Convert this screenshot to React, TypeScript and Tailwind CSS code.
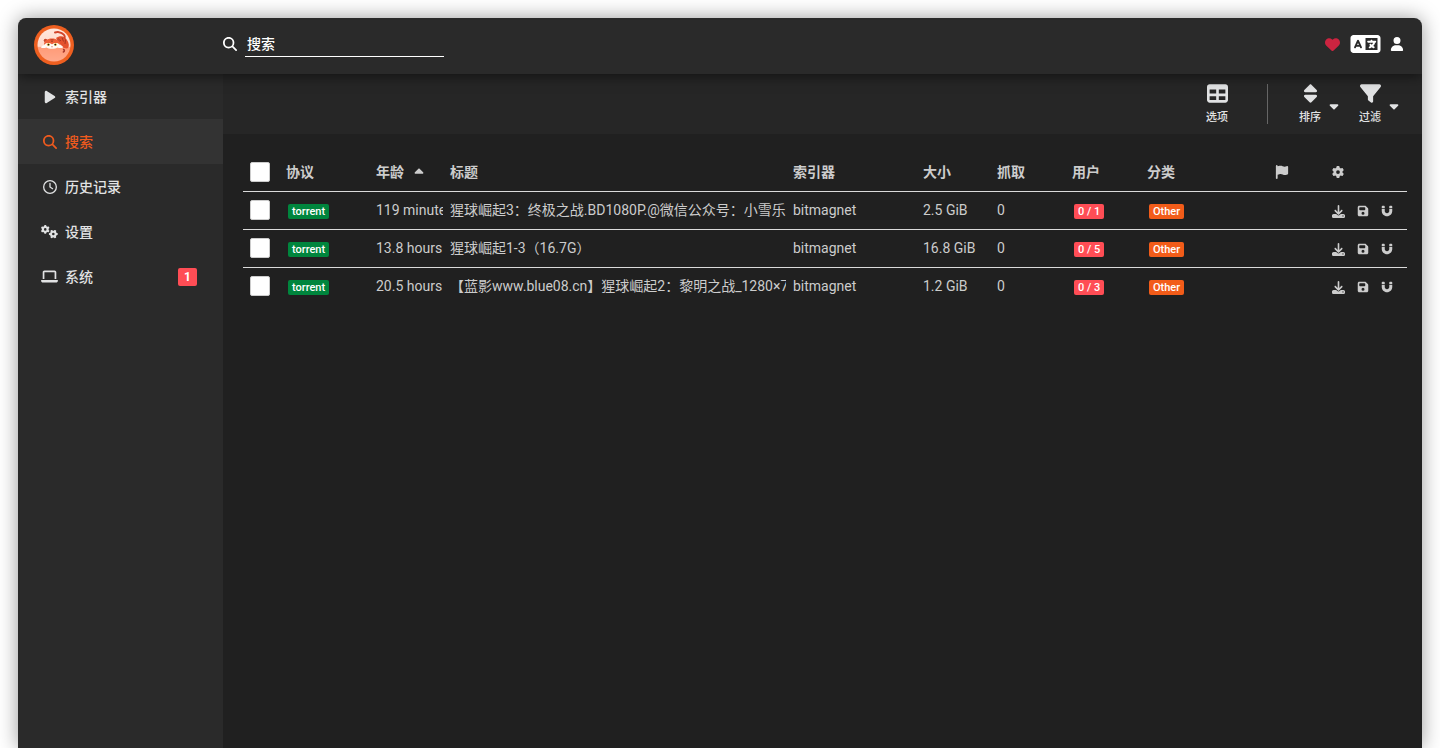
import type { ReactNode } from 'react';
import type { IconType } from 'react-icons';
import {
  FaCaretDown,
  FaCaretUp,
  FaDownload,
  FaFilter,
  FaFlag,
  FaFloppyDisk,
  FaGear,
  FaGears,
  FaHeart,
  FaLanguage,
  FaLaptop,
  FaMagnet,
  FaMagnifyingGlass,
  FaPlay,
  FaRegClock,
  FaSort,
  FaTable,
  FaUser,
} from 'react-icons/fa6';

type NavItem = { label: string; icon: IconType; active?: boolean; badge?: number };

const navItems: NavItem[] = [
  { label: '索引器', icon: FaPlay },
  { label: '搜索', icon: FaMagnifyingGlass, active: true },
  { label: '历史记录', icon: FaRegClock },
  { label: '设置', icon: FaGears },
  { label: '系统', icon: FaLaptop, badge: 1 },
];

const releases = [
  { age: '119 minutes', title: '猩球崛起3：终极之战.BD1080P.@微信公众号：小雪乐园', size: '2.5 GiB', grabs: 0, peers: '0 / 1' },
  { age: '13.8 hours', title: '猩球崛起1-3（16.7G）', size: '16.8 GiB', grabs: 0, peers: '0 / 5' },
  { age: '20.5 hours', title: '【蓝影www.blue08.cn】猩球崛起2：黎明之战_1280×720', size: '1.2 GiB', grabs: 0, peers: '0 / 3' },
];

function Logo() {
  return (
    <svg viewBox="0 0 40 40" className="size-10" aria-hidden="true">
      <defs>
        <linearGradient id="logoFill" x1="0" y1="0" x2="0" y2="1">
          <stop offset="0" stopColor="#ffe6dc" />
          <stop offset="0.54" stopColor="#ffd9ca" />
          <stop offset="0.58" stopColor="#ff9b78" />
          <stop offset="1" stopColor="#ffa98c" />
        </linearGradient>
      </defs>
      <circle cx="20" cy="20" r="20" fill="#ee5f20" />
      <circle cx="20" cy="20" r="16.500" fill="url(#logoFill)" />
      {/* body and tail */}
      <path d="M22 13c4-3 9-2 11 2 2 3 2.500 6 1 8-1 1-4 0-6-1z" fill="#e5522e" />
      <path d="M21 7.500c3-1 6 0 8 1.500 1.500 1 2 2.500 1.500 4" stroke="#d2452b" strokeWidth="2" fill="none" strokeLinecap="round" strokeDasharray="3 0.800" />
      <path d="M24.500 13.500l2.500 2.500M28 12.500l1.500 4M31.500 14.500l-.5 4.500" stroke="#93301f" strokeWidth="0.800" fill="none" />
      <path d="M29.500 24.500c1.500.5 1 2-.2 2.500" stroke="#a9382a" strokeWidth="1.500" fill="none" strokeLinecap="round" />
      {/* head */}
      <circle cx="11.500" cy="15.500" r="1.800" fill="#c94a30" />
      <circle cx="24.500" cy="15.500" r="1.800" fill="#c94a30" />
      <path d="M10 19.500c0-3.500 3-6 8-6s8 2.500 8 6z" fill="#ee5f38" />
      <path d="M7 22.500c.5-1.500 2-2.500 3.500-2.500 1-2.500 5-2.500 7.500-.5 2.500-2 6.500-2 7.500.5 2 0 3.500 1 3.500 2.500-2 1-4 .5-5.500 0-2 1.800-9 1.800-11 0-2 .5-4 1-5.500 0z" fill="#fffaf5" />
      <circle cx="14.300" cy="19.500" r="1.500" fill="#f5cf62" />
      <circle cx="21.500" cy="19.500" r="1.500" fill="#f5cf62" />
      <circle cx="14.500" cy="19.600" r="0.900" fill="#241512" />
      <circle cx="21.300" cy="19.600" r="0.900" fill="#241512" />
      <path d="M16.500 14.800h3M17 16.300h2" stroke="#93301f" strokeWidth="0.700" />
      <path d="M17 21.400h2l-1 1.100z" fill="#c4452c" />
    </svg>
  );
}

function Header() {
  return (
    <header className="relative z-10 flex h-14 items-center bg-[#2a2a2a] pr-[15px] pb-1 pl-4 text-white shadow-[0_2px_12px_rgba(0,0,0,0.55)]">
      <a href="#home" aria-label="首页" className="w-[189px] pt-0.5">
        <Logo />
      </a>
      <div className="flex items-center gap-2">
        <label htmlFor="search">
          <FaMagnifyingGlass className="size-[14px]" aria-label="搜索" />
        </label>
        <input
          id="search"
          type="text"
          placeholder="搜索"
          className="h-[26px] w-[199px] border-b border-white bg-transparent px-0.5 text-sm font-medium outline-none placeholder:text-white"
        />
      </div>
      <div className="ml-auto flex items-center">
        <a href="#donate" aria-label="捐赠" className="text-[#cc2440]">
          <FaHeart className="size-[15px]" />
        </a>
        <button type="button" aria-label="语言" className="ml-2.5">
          <FaLanguage className="h-6 w-[31px]" />
        </button>
        <button type="button" aria-label="用户" className="ml-1.5 flex w-5 justify-center">
          <FaUser className="size-[14px]" />
        </button>
      </div>
    </header>
  );
}

function Sidebar() {
  return (
    <nav className="w-[205px] shrink-0 bg-[#2a2a2a]">
      {navItems.map(({ label, icon: Icon, active, badge }) => (
        <a
          key={label}
          href="#nav"
          className={`flex h-[45px] items-center pr-[26px] pl-[22px] text-sm font-medium ${
            active ? 'bg-[#333333] text-[#ee5a1e]' : 'text-[#e1e2e3]'
          }`}
        >
          <span className="flex w-[19px] justify-center">
            <Icon className={Icon === FaGears || Icon === FaLaptop ? 'size-[17px]' : 'size-[14px]'} />
          </span>
          <span className="ml-1.5">{label}</span>
          {badge && (
            <span className="ml-auto rounded-xs bg-[#ff4d55] px-1.5 text-xs leading-[18px] font-bold text-white">{badge}</span>
          )}
        </a>
      ))}
    </nav>
  );
}

function ToolbarButton({ label, icon: Icon, menu }: { label: string; icon: IconType; menu?: boolean }) {
  return (
    <button type="button" className="flex w-[60px] items-center justify-center">
      <span className="flex flex-col items-center gap-1.5">
        <Icon className="size-[21px]" />
        <span className="text-[11px] leading-4 font-medium">{label}</span>
      </span>
      {menu && <FaCaretDown className="mt-1 -mr-1 ml-1.5 size-3.5" />}
    </button>
  );
}

function Toolbar() {
  return (
    <div className="flex h-[60px] items-center justify-end bg-[#262626] pr-[14px] text-[#e1e2e3]">
      <ToolbarButton label="选项" icon={FaTable} />
      <div className="mr-5 ml-5 h-10 w-px bg-[#666]" />
      <ToolbarButton label="排序" icon={FaSort} menu />
      <ToolbarButton label="过滤" icon={FaFilter} menu />
    </div>
  );
}

function Check({ label }: { label: string }) {
  return (
    <input
      type="checkbox"
      aria-label={label}
      className="block size-5 appearance-none rounded-xs border border-[#ccc] bg-white checked:bg-[#ee5a1e]"
    />
  );
}

function Label({ color, children }: { color: string; children: ReactNode }) {
  return (
    <span className={`mx-0.5 inline-block rounded-xs px-1 align-middle text-[11px] leading-[15px] font-medium text-white ${color}`}>
      {children}
    </span>
  );
}

function ReleaseTable() {
  return (
    <table className="w-full table-fixed text-left text-sm whitespace-nowrap text-[#ccc] [&_td]:overflow-hidden [&_td]:pl-[7px] [&_th]:pl-[7px]">
      <colgroup>
        <col className="w-9" />
        <col className="w-[90px]" />
        <col className="w-[74px]" />
        <col />
        <col className="w-[130px]" />
        <col className="w-[74px]" />
        <col className="w-[75px]" />
        <col className="w-[75px]" />
        <col className="w-[128px]" />
        <col className="w-[57px]" />
        <col className="w-[82px]" />
      </colgroup>
      <thead>
        <tr className="h-[38px] [&>th]:font-bold">
          <th>
            <Check label="全选" />
          </th>
          <th>协议</th>
          <th>
            <span className="flex items-center gap-2">
              年龄
              <FaCaretUp className="size-3.5" />
            </span>
          </th>
          <th>标题</th>
          <th>索引器</th>
          <th>大小</th>
          <th>抓取</th>
          <th>用户</th>
          <th>分类</th>
          <th>
            <FaFlag className="size-3.5" aria-label="标记" />
          </th>
          <th>
            <button type="button" aria-label="表格选项" className="block">
              <FaGear className="size-3" />
            </button>
          </th>
        </tr>
      </thead>
      <tbody>
        {releases.map((release) => (
          <tr key={release.title} className="h-[38px] border-t border-[#dadada]">
            <td>
              <Check label={release.title} />
            </td>
            <td>
              <Label color="bg-[#00853d]">torrent</Label>
            </td>
            <td>{release.age}</td>
            <td>{release.title}</td>
            <td>bitmagnet</td>
            <td>{release.size}</td>
            <td>{release.grabs}</td>
            <td>
              <Label color="bg-[#ff4d55]">{release.peers}</Label>
            </td>
            <td>
              <Label color="bg-[#f25c19]">Other</Label>
            </td>
            <td />
            <td>
              <span className="flex items-center gap-3 pt-0.5">
                <button type="button" aria-label="下载">
                  <FaDownload className="size-[13px]" />
                </button>
                <button type="button" aria-label="保存">
                  <FaFloppyDisk className="size-3" />
                </button>
                <a href="#magnet" aria-label="磁力链接">
                  <FaMagnet className="size-3" />
                </a>
              </span>
            </td>
          </tr>
        ))}
      </tbody>
    </table>
  );
}

export default function App() {
  return (
    <div className="flex min-h-screen flex-col bg-white px-[18px] pt-[18px] font-[Roboto,'Noto_Sans_CJK_SC',sans-serif]">
      <div className="flex flex-1 flex-col overflow-hidden rounded-t-lg shadow-[0_0_20px_rgba(0,0,0,0.4)]">
        <Header />
        <div className="flex flex-1">
          <Sidebar />
          <main className="min-w-0 flex-1 bg-[#202020]">
            <Toolbar />
            <div className="pt-[19px] pr-[15px] pl-5">
              <ReleaseTable />
            </div>
          </main>
        </div>
      </div>
    </div>
  );
}
